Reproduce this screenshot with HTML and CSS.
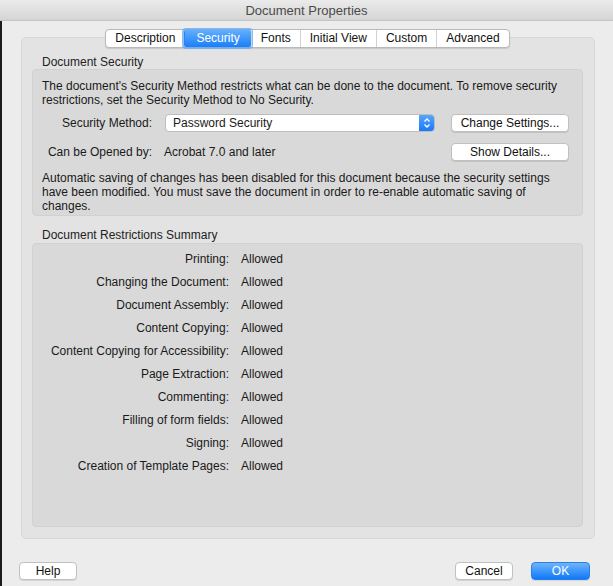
FILE: index.html
```html
<!DOCTYPE html>
<html lang="en">
<head>
    <meta charset="UTF-8">
    <title>Document Properties</title>
    <link rel="stylesheet" href="styles.css">
</head>
<body>
    <div class="window">
        <div class="titlebar">Document Properties</div>

        <div class="content">
            <div class="panel">
                <div class="tabs">
                    <div class="tab">Description</div>
                    <div class="tab selected">Security</div>
                    <div class="tab">Fonts</div>
                    <div class="tab">Initial View</div>
                    <div class="tab">Custom</div>
                    <div class="tab">Advanced</div>
                </div>

                <div class="group-label">Document Security</div>
                <div class="group security">
                    <p>The document's Security Method restricts what can be done to the document. To remove security restrictions, set the Security Method to No Security.</p>

                    <div class="sec-grid">
                        <div class="sec-label">Security Method:</div>
                        <div class="select">
                            <span>Password Security</span>
                            <span class="stepper">
                                <svg width="8" height="12" viewBox="0 0 8 12">
                                    <path d="M1.5 4.5 L4 2 L6.5 4.5 M1.5 7.5 L4 10 L6.5 7.5" fill="none" stroke="#fff" stroke-width="1.3"/>
                                </svg>
                            </span>
                        </div>
                        <div class="btn">Change Settings...</div>

                        <div class="sec-label">Can be Opened by:</div>
                        <div class="sec-value">Acrobat 7.0 and later</div>
                        <div class="btn">Show Details...</div>
                    </div>

                    <p class="notice">Automatic saving of changes has been disabled for this document because the security settings have been modified. You must save the document in order to re-enable automatic saving of changes.</p>
                </div>

                <div class="group-label second">Document Restrictions Summary</div>
                <div class="group restrictions">
                    <div class="r-label">Printing:</div><div class="r-value">Allowed</div>
                    <div class="r-label">Changing the Document:</div><div class="r-value">Allowed</div>
                    <div class="r-label">Document Assembly:</div><div class="r-value">Allowed</div>
                    <div class="r-label">Content Copying:</div><div class="r-value">Allowed</div>
                    <div class="r-label">Content Copying for Accessibility:</div><div class="r-value">Allowed</div>
                    <div class="r-label">Page Extraction:</div><div class="r-value">Allowed</div>
                    <div class="r-label">Commenting:</div><div class="r-value">Allowed</div>
                    <div class="r-label">Filling of form fields:</div><div class="r-value">Allowed</div>
                    <div class="r-label">Signing:</div><div class="r-value">Allowed</div>
                    <div class="r-label">Creation of Template Pages:</div><div class="r-value">Allowed</div>
                </div>
            </div>

            <div class="footer">
                <div class="btn small">Help</div>
                <div class="spacer"></div>
                <div class="btn small">Cancel</div>
                <div class="btn small primary">OK</div>
            </div>
        </div>
    </div>
</body>
</html>
```

FILE: styles.css
```css
html, body {
    overflow: hidden;
    background: #ececec;
}
body {
    margin: 0;
    font-family: 'Liberation Sans', Arial, sans-serif;
    font-size: 12px;
    color: #1a1a1a;
}
.window {
    width: 613px;
    height: 586px;
    background: #ececec;
    overflow: hidden;
}
.titlebar {
    height: 20px;
    line-height: 21px;
    text-align: center;
    font-size: 13px;
    color: #4a4a4a;
    background: linear-gradient(#ebebeb, #d5d5d5);
    border-bottom: 1px solid #c4c4c4;
}
.content {
    border-left: 2px solid #1c1c1c;
    width: 613px;
    height: 565px;
    padding: 16px 0 0 19px;
    box-sizing: border-box;
    background: #ececec;
}
.panel {
    width: 574px;
    height: 502px;
    box-sizing: border-box;
    background: #e3e3e3;
    border: 1px solid #d8d8d8;
    border-radius: 5px;
    padding: 0 11px 0 10px;
    display: flex;
    flex-direction: column;
}
.tabs {
    display: flex;
    align-self: center;
    margin-top: -9px;
    height: 17px;
    background: #fff;
    border: 1px solid #b9b9b9;
    border-radius: 4px;
    box-shadow: 0 1px 1px rgba(0,0,0,0.12);
}
.tab {
    padding: 0 9px;
    line-height: 17px;
    font-size: 12px;
    color: #111;
    border-left: 1px solid #d2d2d2;
}
.tab:first-child {
    border-left: none;
}
.tab.selected {
    color: #fff;
    background: linear-gradient(#62aefc, #1a7ff8);
    border-left: 1px solid #2a84f0;
    box-shadow: 0 0 0 2px rgba(100, 165, 245, 0.75);
    border-radius: 2px;
    padding: 0 11px;
}
.group-label {
    margin: 7px 0 0 10px;
    line-height: 14px;
    height: 14px;
    color: #222;
}
.group-label.second {
    margin-top: 12px;
}
.group {
    background: #d9d9d9;
    border: 1px solid #d1d1d1;
    border-radius: 4px;
}
.security {
    height: 147px;
    box-sizing: border-box;
    padding: 9px 8px 0 9px;
}
.security p {
    margin: 0;
    line-height: 14px;
}
.sec-grid {
    display: grid;
    grid-template-columns: 122px 287px 118px;
    row-gap: 11px;
    align-items: center;
    margin-top: 7px;
}
.sec-label {
    text-align: right;
    padding-right: 12px;
}
.select {
    width: 270px;
    margin-left: 1px;
    height: 18px;
    box-sizing: border-box;
    background: #fff;
    border: 1px solid #bdbdbd;
    border-radius: 4px;
    display: flex;
    align-items: center;
    justify-content: space-between;
    padding-left: 7px;
    overflow: hidden;
}
.stepper {
    width: 16px;
    height: 18px;
    margin-right: -1px;
    background: linear-gradient(#5aa8fb, #1676f6);
    border-radius: 0 4px 4px 0;
    display: flex;
    align-items: center;
    justify-content: center;
}
.btn {
    height: 18px;
    line-height: 16px;
    box-sizing: border-box;
    text-align: center;
    background: #fff;
    border: 1px solid #c0c0c0;
    border-radius: 4px;
    box-shadow: 0 1px 0 rgba(0,0,0,0.1);
    color: #111;
}
.notice {
    margin-top: 10px !important;
}
.restrictions {
    height: 284px;
    box-sizing: border-box;
    margin-top: 1px;
    padding-top: 4px;
    display: grid;
    grid-template-columns: 196px auto;
    grid-auto-rows: 23px;
    column-gap: 12px;
    align-content: start;
}
.r-label {
    text-align: right;
    line-height: 23px;
}
.r-value {
    line-height: 23px;
}
.footer {
    display: flex;
    align-items: center;
    margin-top: 23px;
    margin-left: -2px;
    width: 571px;
}
.spacer {
    flex: 1;
}
.btn.small {
    width: 58px;
}
.footer .btn + .btn {
    margin-left: 18px;
}
.btn.primary {
    width: 59px;
    color: #fff;
    border-color: #2b7fe8;
    background: linear-gradient(#6db4fc, #0f79f8);
}
```
